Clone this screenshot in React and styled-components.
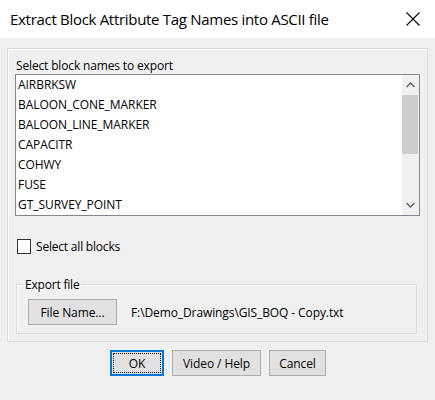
import React from "react";
import styled, { createGlobalStyle } from "styled-components";

const Global = createGlobalStyle`
  html, body { margin: 0; padding: 0; background: #f0f0f0; }
  body { font-family: "Open Sans", "Noto Sans", sans-serif; font-size: 12px; color: #000; }
  * { box-sizing: border-box; }
`;

const Window = styled.div`
  width: 435px;
  height: 400px;
  background: #f0f0f0;
  display: flex;
  flex-direction: column;
`;

const TitleBar = styled.div`
  height: 38px;
  background: #fff;
  display: flex;
  align-items: center;
  justify-content: space-between;
  padding: 0 14px 0 10px;
`;

const Title = styled.div`
  font-size: 15px;
  color: #000;
  letter-spacing: -0.3px;
  margin-top: -1px;
`;

const Body = styled.div`
  padding: 10px 7px 0 7px;
  display: flex;
  flex-direction: column;
`;

const Group = styled.div`
  height: 294px;
  border: 1px solid #dcdcdc;
  box-shadow: inset 1px 1px 0 #fff;
  padding: 9px 8px 0 7px;
  display: flex;
  flex-direction: column;
`;

const Label = styled.div`
  line-height: 15px;
  height: 16px;
  padding-left: 1px;
  letter-spacing: -0.15px;
`;

const ListBox = styled.div`
  width: 405px;
  height: 142px;
  border: 1px solid #828790;
  background: #fff;
  display: flex;
`;

const Items = styled.div`
  flex: 1;
  display: flex;
  flex-direction: column;
  overflow: hidden;
`;

const Item = styled.div`
  height: 20px;
  line-height: 20px;
  padding-left: 2px;
  letter-spacing: -0.05px;
  white-space: nowrap;
`;

const ScrollBar = styled.div`
  width: 17px;
  background: #f0f0f0;
  display: flex;
  flex-direction: column;
`;

const ScrollBtn = styled.div`
  height: 20px;
  display: flex;
  align-items: center;
  justify-content: center;
`;

const Track = styled.div`
  flex: 1;
  display: flex;
  flex-direction: column;
`;

const Thumb = styled.div`
  height: 59px;
  margin: 0 1px 0 0;
  background: #cdcdcd;
`;

const CheckRow = styled.label`
  display: flex;
  align-items: center;
  gap: 5px;
  margin-top: 22px;
  padding-left: 2px;
  height: 16px;
`;

const CheckBox = styled.span`
  width: 14px;
  height: 15px;
  border: 1px solid #333;
  background: #fff;
`;

const CheckText = styled.span`
  letter-spacing: -0.2px;
`;

const FieldSet = styled.fieldset`
  margin: 22px 2px 0 1px;
  padding: 6px 10px 0 11px;
  height: 58px;
  border: 1px solid #dcdcdc;
  box-shadow: inset 1px 1px 0 #fff;
  display: flex;
  align-items: center;
  gap: 14px;
`;

const Legend = styled.legend`
  padding: 0 2px;
  margin-left: -5px;
  letter-spacing: -0.2px;
`;

const FileRow = styled.div`
  display: flex;
  align-items: center;
  gap: 14px;
  margin-top: 0px;
`;

const Button = styled.button`
  font-family: inherit;
  font-size: 12px;
  height: 26px;
  width: ${(p) => p.$w}px;
  background: #e1e1e1;
  border: 1px solid ${(p) => (p.$default ? "#0078d7" : "#adadad")};
  box-shadow: ${(p) => (p.$default ? "inset 0 0 0 1px #0078d7" : "none")};
  padding: 0;
  color: #000;
  position: relative;
  letter-spacing: -0.1px;
`;

const Focus = styled.span`
  position: absolute;
  inset: 2px;
  border: 1px dotted #000;
`;

const PathText = styled.span`
  letter-spacing: -0.1px;
`;

const Footer = styled.div`
  display: flex;
  justify-content: center;
  gap: 8px;
  margin-top: 8px;
  padding-left: 1px;
`;

const items = [
  "AIRBRKSW",
  "BALOON_CONE_MARKER",
  "BALOON_LINE_MARKER",
  "CAPACITR",
  "COHWY",
  "FUSE",
  "GT_SURVEY_POINT",
];

export default function App() {
  return (
    <Window>
      <Global />
      <TitleBar>
        <Title>Extract Block Attribute Tag Names into ASCII file</Title>
        <svg width="16" height="16" viewBox="0 0 16 16">
          <path d="M1.5 1.5 L14.5 14.5 M14.5 1.5 L1.5 14.5" stroke="#000" strokeWidth="1.1" fill="none" />
        </svg>
      </TitleBar>
      <Body>
        <Group>
          <Label>Select block names to export</Label>
          <ListBox>
            <Items>
              {items.map((t) => (
                <Item key={t}>{t}</Item>
              ))}
            </Items>
            <ScrollBar>
              <ScrollBtn>
                <svg width="9" height="6" viewBox="0 0 9 6">
                  <path d="M0.5 5 L4.5 1 L8.5 5" stroke="#606060" strokeWidth="1.4" fill="none" />
                </svg>
              </ScrollBtn>
              <Track>
                <Thumb />
              </Track>
              <ScrollBtn>
                <svg width="9" height="6" viewBox="0 0 9 6">
                  <path d="M0.5 1 L4.5 5 L8.5 1" stroke="#606060" strokeWidth="1.4" fill="none" />
                </svg>
              </ScrollBtn>
            </ScrollBar>
          </ListBox>
          <CheckRow>
            <CheckBox />
            <CheckText>Select all blocks</CheckText>
          </CheckRow>
          <FieldSet>
            <Legend>Export file</Legend>
            <FileRow>
              <Button $w={89}>File Name...</Button>
              <PathText>F:\Demo_Drawings\GIS_BOQ - Copy.txt</PathText>
            </FileRow>
          </FieldSet>
        </Group>
        <Footer>
          <Button $w={54} $default>
            OK
            <Focus />
          </Button>
          <Button $w={89}>Video / Help</Button>
          <Button $w={57}>Cancel</Button>
        </Footer>
      </Body>
    </Window>
  );
}
